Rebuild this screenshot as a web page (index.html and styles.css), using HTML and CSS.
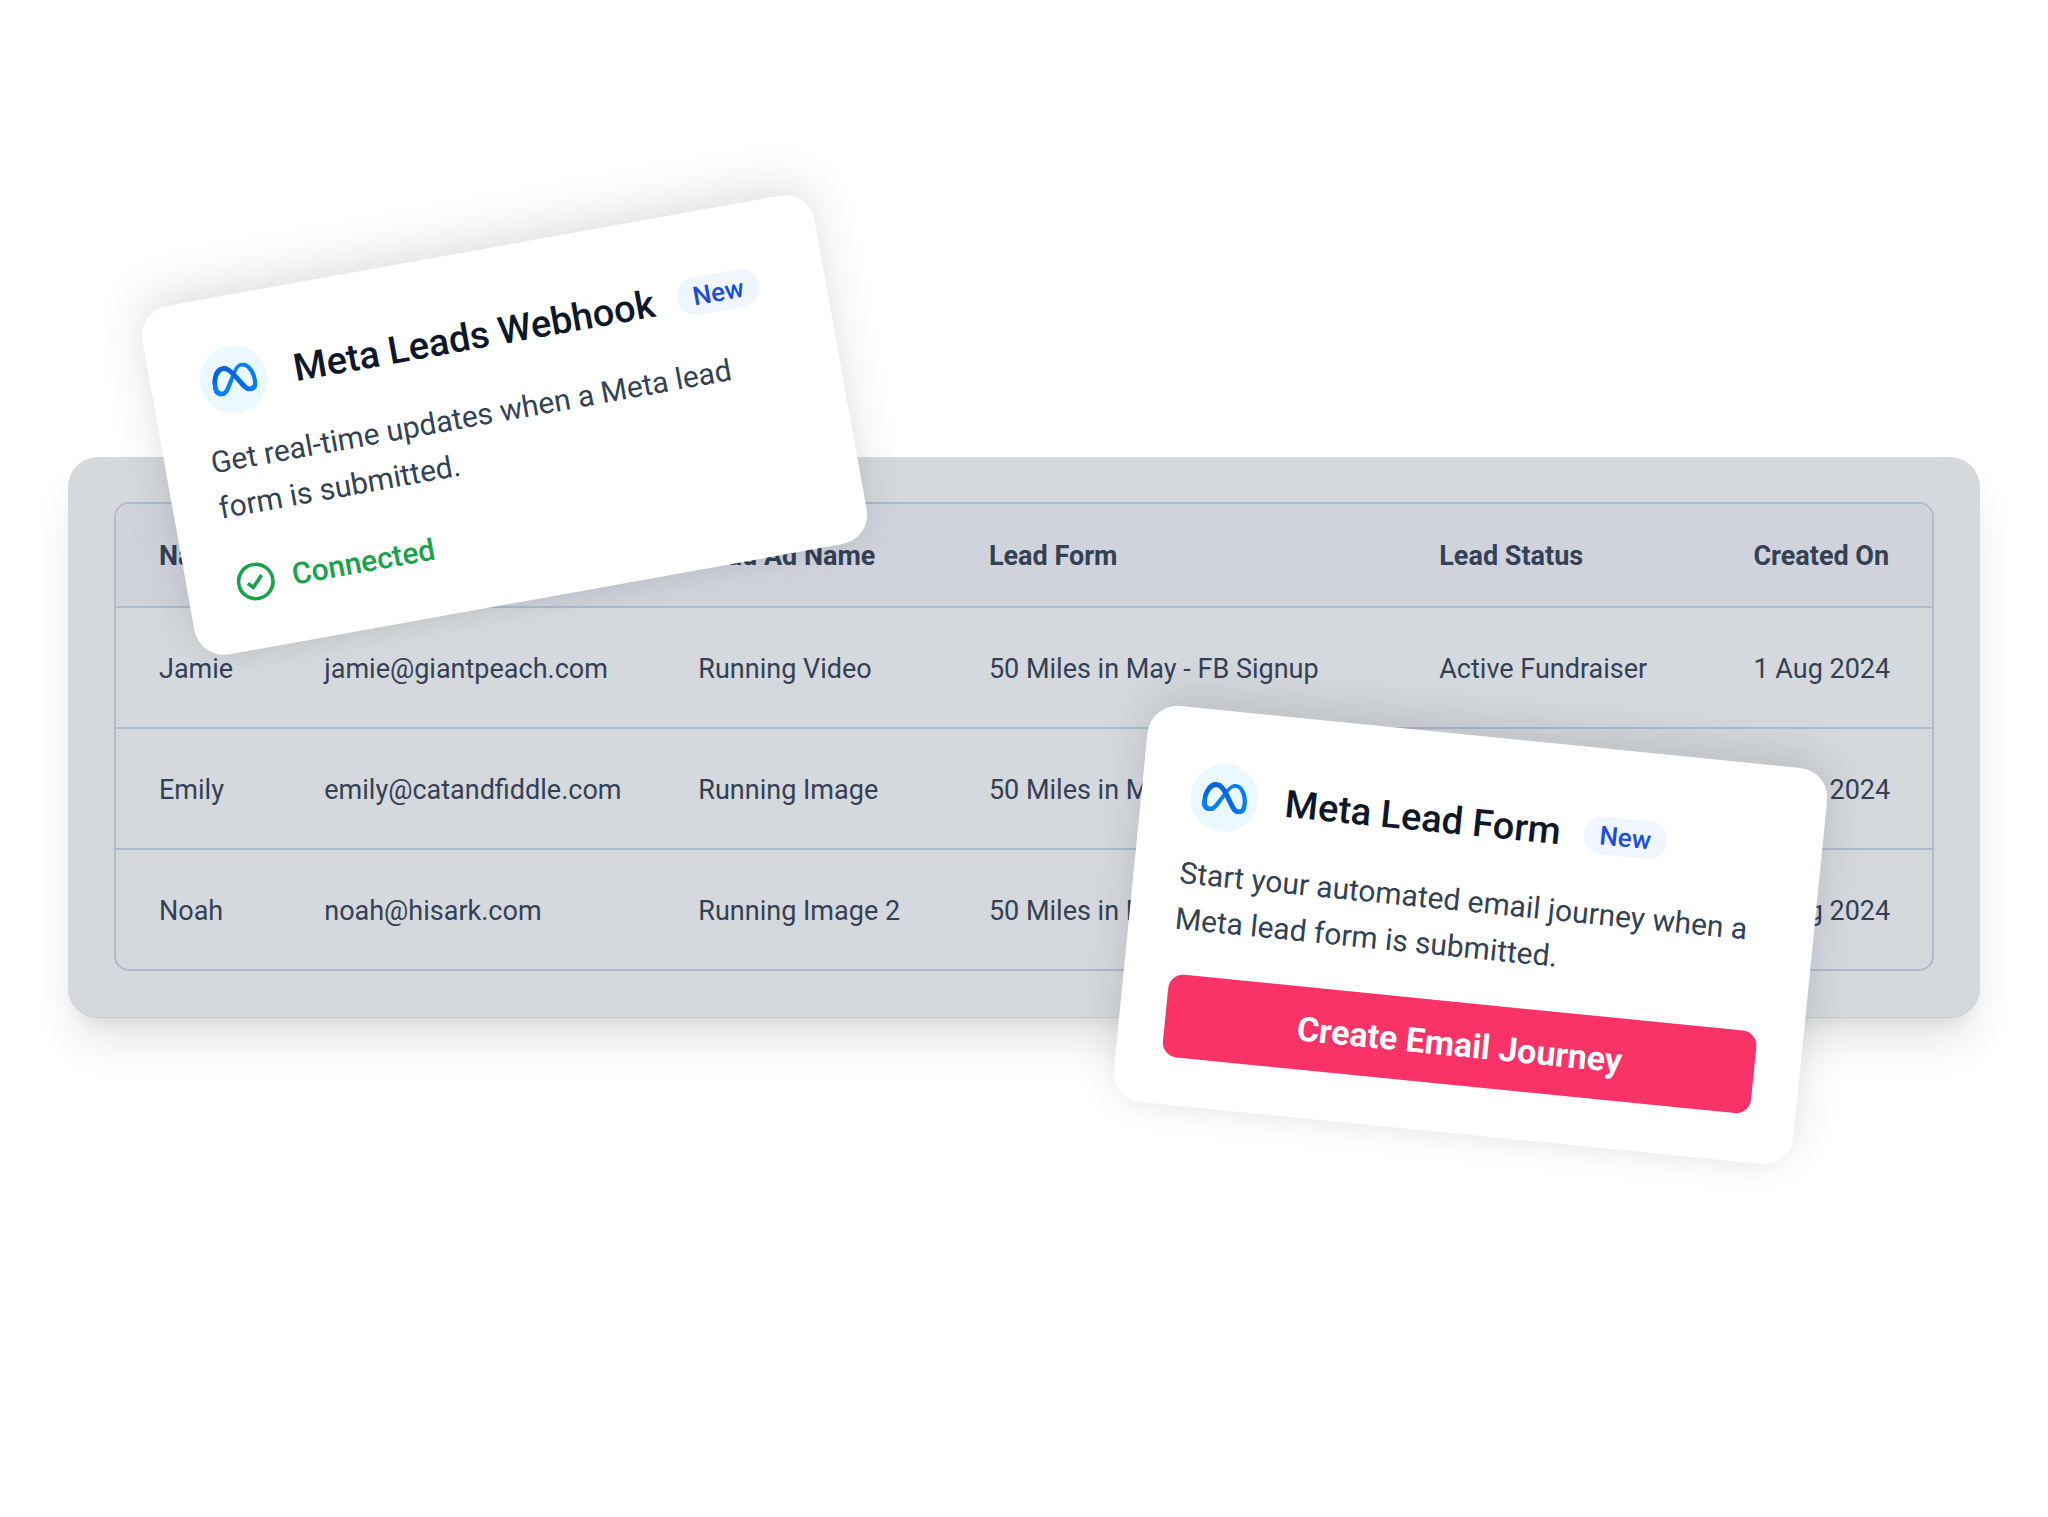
FILE: index.html
```html
<!DOCTYPE html>
<html lang="en">
<head>
  <meta charset="UTF-8" />
  <meta name="viewport" content="width=device-width, initial-scale=1.0" />
  <title>Meta Leads</title>
  <link rel="stylesheet" href="styles.css">
</head>
<body>
  <!-- shared logo, used in both cards -->
  <svg class="defs" aria-hidden="true">
    <linearGradient id="metaA" x1="61" y1="117" x2="259" y2="127" gradientUnits="userSpaceOnUse">
      <stop offset="0" stop-color="#0064e1" />
      <stop offset="0.4" stop-color="#0064e1" />
      <stop offset="0.83" stop-color="#0073ee" />
      <stop offset="1" stop-color="#0082fb" />
    </linearGradient>
    <linearGradient id="metaB" x1="45" y1="139" x2="45" y2="66" gradientUnits="userSpaceOnUse">
      <stop offset="0" stop-color="#0082fb" />
      <stop offset="1" stop-color="#0064e0" />
    </linearGradient>
    <symbol id="meta" viewBox="0 0 287.56 191">
      <path fill="#0081fb" d="m31.06,126c0,11 2.41,19.41 5.56,24.51 4.13,6.68 10.29,9.51 16.57,9.51 8.1,0 15.51-2.01 29.79-21.76 11.44-15.83 24.92-38.05 33.99-51.98l15.36-23.6c10.67-16.39 23.02-34.61 37.18-46.96 11.56-10.08 24.03-15.68 36.58-15.68 21.07,0 41.14,12.21 56.5,35.11 16.81,25.08 24.97,56.67 24.97,89.27 0,19.38-3.82,33.62-10.32,44.87-6.28,10.88-18.52,21.75-39.11,21.75v-31.02c17.63,0 22.03-16.2 22.03-34.74 0-26.42-6.16-55.74-19.73-76.69-9.63-14.86-22.11-23.94-35.84-23.94-14.85,0-26.8,11.2-40.23,31.17-7.14,10.61-14.47,23.54-22.7,38.13l-9.06,16.05c-18.2,32.27-22.81,39.62-31.91,51.75-15.95,21.24-29.57,29.29-47.5,29.29-21.27,0-34.72-9.21-43.05-23.09-6.8-11.31-10.14-26.15-10.14-43.06z" />
      <path fill="url(#metaA)" d="m24.49,37.3c14.24-21.95 34.79-37.3 58.36-37.3 13.65,0 27.22,4.04 41.39,15.61 15.5,12.65 32.02,33.48 52.63,67.81l7.39,12.32c17.84,29.72 27.99,45.01 33.93,52.22 7.64,9.26 12.99,12.02 19.94,12.02 17.63,0 22.03-16.2 22.03-34.74l27.4-.86c0,19.38-3.82,33.62-10.32,44.87-6.28,10.88-18.52,21.75-39.11,21.75-12.8,0-24.14-2.78-36.68-14.61-9.64-9.08-20.91-25.21-29.58-39.71l-25.79-43.08c-12.94-21.62-24.81-37.74-31.68-45.04-7.39-7.85-16.89-17.33-32.05-17.33-12.27,0-22.69,8.61-31.41,21.78z" />
      <path fill="url(#metaB)" d="m82.35,31.23c-12.27,0-22.69,8.61-31.41,21.78-12.33,18.61-19.88,46.33-19.88,72.95 0,10.98 2.41,19.41 5.56,24.51l-26.48,17.44c-6.8-11.31-10.14-26.15-10.14-43.06 0-30.75 8.44-62.8 24.49-87.55 14.24-21.95 34.79-37.3 58.36-37.3z" />
    </symbol>
  </svg>

  <main class="stage">
    <div class="panel">
      <div class="table-wrap">
        <table>
          <colgroup>
            <col class="col-name">
            <col class="col-email">
            <col class="col-ad">
            <col class="col-form">
            <col class="col-status">
            <col class="col-date">
          </colgroup>
          <thead>
            <tr>
              <th>Name</th>
              <th>Email</th>
              <th>Lead Ad Name</th>
              <th>Lead Form</th>
              <th>Lead Status</th>
              <th>Created On</th>
            </tr>
          </thead>
          <tbody>
            <tr>
              <td>Jamie</td>
              <td>jamie@giantpeach.com</td>
              <td>Running Video</td>
              <td>50 Miles in May - FB Signup</td>
              <td>Active Fundraiser</td>
              <td>1 Aug 2024</td>
            </tr>
            <tr>
              <td>Emily</td>
              <td>emily@catandfiddle.com</td>
              <td>Running Image</td>
              <td>50 Miles in May - FB Signup</td>
              <td>Active Fundraiser</td>
              <td>1 Aug 2024</td>
            </tr>
            <tr>
              <td>Noah</td>
              <td>noah@hisark.com</td>
              <td>Running Image 2</td>
              <td>50 Miles in May - FB Signup</td>
              <td>Active Fundraiser</td>
              <td>1 Aug 2024</td>
            </tr>
          </tbody>
        </table>
      </div>

      <section class="card card-webhook">
        <div class="card-head">
          <span class="logo"><svg><use href="#meta" /></svg></span>
          <h2>Meta Leads Webhook</h2>
          <span class="badge">New</span>
        </div>
        <p>Get real-time updates when a Meta lead form is submitted.</p>
        <div class="status">
          <svg viewBox="0 0 38 38">
            <circle cx="19" cy="19" r="17.2" />
            <path d="M10.8 19.5l4.8 4.8 10.2-10.6" />
          </svg>
          <span>Connected</span>
        </div>
      </section>

      <section class="card card-form">
        <div class="card-head">
          <span class="logo"><svg><use href="#meta" /></svg></span>
          <h2>Meta Lead Form</h2>
          <span class="badge">New</span>
        </div>
        <p>Start your automated email journey when a Meta lead form is submitted.</p>
        <button class="btn" type="button">Create Email Journey</button>
      </section>
    </div>
  </main>
</body>
</html>
```
FILE: styles.css
```css
* {
  box-sizing: border-box;
}
body {
  margin: 0;
  background: #fff;
  color: #334155;
  font-family: Roboto, sans-serif;
}
.defs {
  position: absolute;
  width: 0;
  height: 0;
}
.stage {
  min-height: 100vh;
  padding: 457px 68px 0;
  overflow: hidden;
}
.panel {
  position: relative;
  padding: 45px 46px 46px;
  border-bottom: 1px solid #c8ccd0;
  border-radius: 30px;
  background: #d5d8dd;
  box-shadow: 0 30px 44px -6px rgba(0, 0, 0, 0.1), 0 12px 16px -9px rgba(0, 0, 0, 0.08);
}

/* leads table */
.table-wrap {
  border: 2px solid #afbacb;
  border-radius: 15px;
  overflow: hidden;
}
table {
  width: 100%;
  table-layout: fixed;
  border-collapse: separate;
  border-spacing: 0;
  font-size: 27px;
  line-height: 40px;
}
.col-name { width: 9.1%; }
.col-email { width: 20.6%; }
.col-ad { width: 16%; }
.col-form { width: 24.8%; }
.col-status { width: 17.3%; }
th, td {
  padding: 2px 0 0 43px;
  text-align: left;
  white-space: nowrap;
}
th {
  height: 102px;
  background: #d0d3dc;
  font-weight: 700;
}
td {
  height: 121px;
  border-top: 2px solid #afbacb;
}

/* tilted cards */
.card {
  position: absolute;
  width: 683px;
  padding: 50px 46px 48px;
  border-radius: 30px;
  background: #fff;
  box-shadow: 0 -12px 48px rgba(0, 0, 0, 0.12), 0 12px 24px -8px rgba(0, 0, 0, 0.04);
}
.card-webhook {
  left: 95px;
  top: -209px;
  transform: rotate(-10.2deg);
}
.card-form {
  right: 168px;
  top: 279px;
  padding-top: 53px;
  transform: rotate(5.7deg);
}
.card-head {
  display: flex;
  align-items: center;
  padding-left: 3px;
}
.logo {
  display: flex;
  align-items: center;
  justify-content: center;
  width: 68px;
  height: 68px;
  margin-right: 27px;
  border-radius: 50%;
  background: #ecf8ff;
}
.logo svg {
  width: 45px;
  height: 30px;
}
h2 {
  margin: 0;
  color: #0f172a;
  font-size: 38px;
  font-weight: 500;
  line-height: 48px;
}
.badge {
  margin-left: 23px;
  padding: 0 16px;
  border-radius: 19px;
  background: #eff6ff;
  color: #1d4ed8;
  font-size: 26px;
  font-weight: 500;
  line-height: 38px;
}
.card p {
  margin: 22px 0 0;
  font-size: 30px;
  line-height: 46px;
}
.status {
  display: flex;
  align-items: center;
  gap: 18px;
  margin-top: 36px;
  padding-left: 4px;
  color: #16a34a;
  font-size: 30px;
  font-weight: 500;
  line-height: 38px;
}
.status svg {
  width: 38px;
  height: 38px;
  fill: none;
  stroke: currentColor;
  stroke-width: 3.6;
}
.btn {
  display: block;
  width: 100%;
  height: 83px;
  margin-top: 32px;
  border: none;
  border-radius: 15px;
  background: #f93268;
  color: #fff;
  font-family: inherit;
  font-size: 34px;
  font-weight: 700;
  cursor: pointer;
}
```
